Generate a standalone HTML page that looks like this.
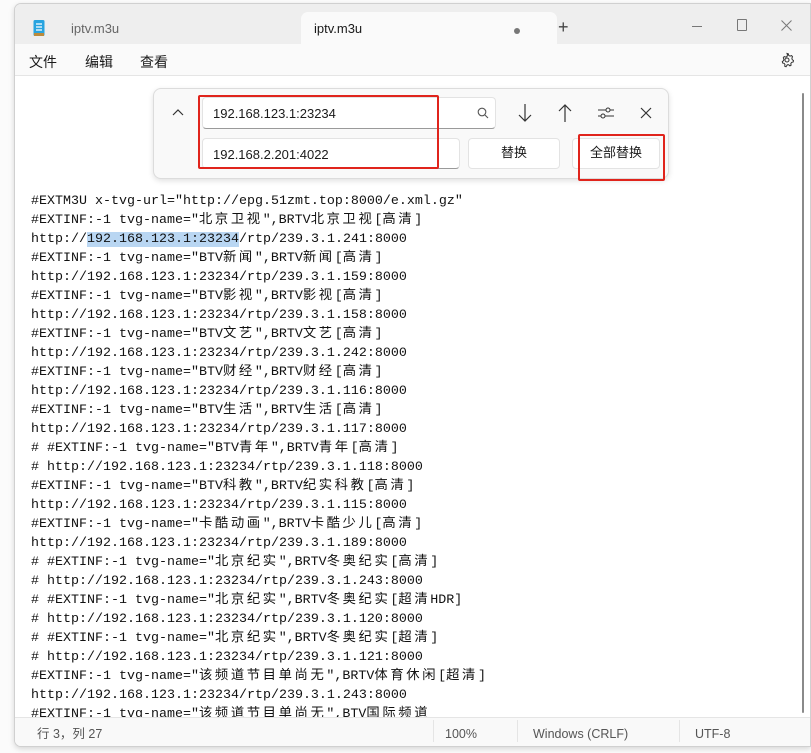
<!DOCTYPE html>
<html><head><meta charset="utf-8"><style>
*{margin:0;padding:0;box-sizing:border-box}
body{width:811px;height:753px;background:#fbfbfb;position:relative;overflow:hidden;font-family:"Liberation Sans","Noto Sans CJK SC",sans-serif;color:#1a1a1a}
.win{position:absolute;left:14px;top:3px;width:797px;height:744px;background:#fff;border:1px solid #d0d0d0;border-radius:7px 0 0 7px;overflow:hidden;box-shadow:0 2px 6px rgba(0,0,0,.15)}
.title{position:absolute;left:0;top:0;width:100%;height:40px;background:#eeeeee}
.tab{position:absolute;left:286px;top:8px;width:256px;height:33px;background:#fafafa;border-radius:7px 7px 0 0}
.menu{position:absolute;left:0;top:40px;width:100%;height:32px;background:#fafafa;border-bottom:1px solid #e5e5e5;font-size:14px}
.menu span{position:absolute;top:8px}
.t{position:absolute;font-size:14px}
.code{position:absolute;left:16px;top:188px;font-family:"Liberation Mono","Noto Sans CJK SC",monospace;font-size:13.33px;color:#111}
.code div{height:19px;line-height:19px;white-space:pre;overflow:visible}
.code i{font-style:normal;letter-spacing:2.6px;font-family:"Noto Sans CJK SC",sans-serif;line-height:0}
.hl{background:#b9d6f2}
.status{position:absolute;left:0;top:713px;width:100%;height:31px;background:#f9f9f9;border-top:1px solid #e5e5e5;font-size:12.5px;color:#555}
.status span{position:absolute;top:8px;line-height:16px;height:16px}
.sep{position:absolute;top:2px;width:1px;height:22px;background:#e5e5e5}
.panel{position:absolute;left:153px;top:88px;width:516px;height:91px;background:#f9f9f9;border:1px solid #dcdcdc;border-radius:8px;box-shadow:0 2px 6px rgba(0,0,0,.12)}
.inp{position:absolute;background:#fff;border:1px solid #e3e3e3;border-bottom:1px solid #9a9a9a;border-radius:4px;font-size:13px;padding:8px 10px}
.btn{position:absolute;background:#fff;border:1px solid #e3e3e3;border-radius:4px;font-size:13px;text-align:center;line-height:28px}
.red{position:absolute;border:2.5px solid #e0241c;border-radius:2px}
</style></head><body>
<div class="win">
 <div class="title"></div>
 <div class="tab"></div>
 <svg style="position:absolute;left:18px;top:15px" width="12" height="18" viewBox="0 0 12 18"><rect x="0.5" y="1" width="11" height="16" rx="1.5" fill="#27a4e0"/><rect x="1" y="14" width="10" height="3" fill="#bb8a3c"/><path d="M3 5h6M3 8h6M3 11h6" stroke="#fff" stroke-width="1.2"/></svg>
 <div class="t" style="left:56px;top:17px;font-size:13px;color:#666">iptv.m3u</div>
 <div class="t" style="left:299px;top:17px;font-size:13px">iptv.m3u</div>
 <div style="position:absolute;left:499px;top:24px;width:6px;height:6px;border-radius:50%;background:#777"></div>
 <div class="t" style="left:543px;top:13px;font-size:18px;color:#444">+</div>
 <div style="position:absolute;left:677px;top:22px;width:10px;height:1px;background:#777"></div>
 <div style="position:absolute;left:722px;top:15px;width:10px;height:12px;border:1px solid #777;border-radius:1px"></div>
 <svg style="position:absolute;left:766px;top:16px" width="11" height="11" viewBox="0 0 11 11"><path d="M.5.5l10 10M10.5.5l-10 10" stroke="#777" stroke-width="1"/></svg>
 <div class="menu"><span style="left:14px">文件</span><span style="left:70px">编辑</span><span style="left:125px">查看</span>
  <svg style="position:absolute;left:764px;top:8px" width="16" height="16" viewBox="0 0 16 16"><path d="M8 1.5l1.3.3.4 1.6 1.3.7 1.6-.5.9 1.1-.6 1.5.3 1.4 1.3 1-.3 1.4-1.6.4-.8 1.2.3 1.6-1.2.7-1.2-1.1h-1.4L7 14.8l-1.3-.6.3-1.6-.8-1.2-1.6-.4-.3-1.4 1.3-1 .3-1.4-.6-1.5.9-1.1 1.6.5 1.3-.7.4-1.6z" fill="none" stroke="#333" stroke-width="1"/><circle cx="8" cy="8" r="2" fill="none" stroke="#333"/></svg>
 </div>
 <div style="position:absolute;left:787px;top:89px;width:2px;height:620px;background:#8a8a8a;border-radius:1px"></div>
<div class="code">
<div>#EXTM3U x-tvg-url="http://epg.51zmt.top:8000/e.xml.gz"</div>
<div>#EXTINF:-1 tvg-name="<i>北京卫视</i>",BRTV<i>北京卫视</i>[<i>高清</i>]</div>
<div>http://<span class="hl">192.168.123.1:23234</span>/rtp/239.3.1.241:8000</div>
<div>#EXTINF:-1 tvg-name="BTV<i>新闻</i>",BRTV<i>新闻</i>[<i>高清</i>]</div>
<div>http://192.168.123.1:23234/rtp/239.3.1.159:8000</div>
<div>#EXTINF:-1 tvg-name="BTV<i>影视</i>",BRTV<i>影视</i>[<i>高清</i>]</div>
<div>http://192.168.123.1:23234/rtp/239.3.1.158:8000</div>
<div>#EXTINF:-1 tvg-name="BTV<i>文艺</i>",BRTV<i>文艺</i>[<i>高清</i>]</div>
<div>http://192.168.123.1:23234/rtp/239.3.1.242:8000</div>
<div>#EXTINF:-1 tvg-name="BTV<i>财经</i>",BRTV<i>财经</i>[<i>高清</i>]</div>
<div>http://192.168.123.1:23234/rtp/239.3.1.116:8000</div>
<div>#EXTINF:-1 tvg-name="BTV<i>生活</i>",BRTV<i>生活</i>[<i>高清</i>]</div>
<div>http://192.168.123.1:23234/rtp/239.3.1.117:8000</div>
<div># #EXTINF:-1 tvg-name="BTV<i>青年</i>",BRTV<i>青年</i>[<i>高清</i>]</div>
<div># http://192.168.123.1:23234/rtp/239.3.1.118:8000</div>
<div>#EXTINF:-1 tvg-name="BTV<i>科教</i>",BRTV<i>纪实科教</i>[<i>高清</i>]</div>
<div>http://192.168.123.1:23234/rtp/239.3.1.115:8000</div>
<div>#EXTINF:-1 tvg-name="<i>卡酷动画</i>",BRTV<i>卡酷少儿</i>[<i>高清</i>]</div>
<div>http://192.168.123.1:23234/rtp/239.3.1.189:8000</div>
<div># #EXTINF:-1 tvg-name="<i>北京纪实</i>",BRTV<i>冬奥纪实</i>[<i>高清</i>]</div>
<div># http://192.168.123.1:23234/rtp/239.3.1.243:8000</div>
<div># #EXTINF:-1 tvg-name="<i>北京纪实</i>",BRTV<i>冬奥纪实</i>[<i>超清</i>HDR]</div>
<div># http://192.168.123.1:23234/rtp/239.3.1.120:8000</div>
<div># #EXTINF:-1 tvg-name="<i>北京纪实</i>",BRTV<i>冬奥纪实</i>[<i>超清</i>]</div>
<div># http://192.168.123.1:23234/rtp/239.3.1.121:8000</div>
<div>#EXTINF:-1 tvg-name="<i>该频道节目单尚无</i>",BRTV<i>体育休闲</i>[<i>超清</i>]</div>
<div>http://192.168.123.1:23234/rtp/239.3.1.243:8000</div>
<div>#EXTINF:-1 tvg-name="<i>该频道节目单尚无</i>",BTV<i>国际频道</i></div>
</div>
 <div class="status"><span style="left:22px">行 3，列 27</span><div class="sep" style="left:418px"></div><span style="left:430px">100%</span><div class="sep" style="left:502px"></div><span style="left:518px">Windows (CRLF)</span><div class="sep" style="left:664px"></div><span style="left:680px">UTF-8</span></div>
</div>
<div class="panel">
 <svg style="position:absolute;left:18px;top:19px" width="12" height="8" viewBox="0 0 12 8"><path d="M1 7l5-5 5 5" fill="none" stroke="#333" stroke-width="1.2"/></svg>
 <div class="inp" style="left:48px;top:8px;width:294px;height:32px">192.168.123.1:23234</div>
 <svg style="position:absolute;left:323px;top:18px" width="12" height="12" viewBox="0 0 12 12"><circle cx="5" cy="5" r="3.8" fill="none" stroke="#555" stroke-width="1.1"/><path d="M8 8l3 3" stroke="#555" stroke-width="1.1"/></svg>
 <div class="inp" style="left:48px;top:49px;width:258px;height:31px">192.168.2.201:4022</div>
 <svg style="position:absolute;left:363px;top:14px" width="16" height="20" viewBox="0 0 16 20"><path d="M8 1v17M2 12l6 6 6-6" fill="none" stroke="#333" stroke-width="1.2"/></svg>
 <svg style="position:absolute;left:403px;top:14px" width="16" height="20" viewBox="0 0 16 20"><path d="M8 19V2M2 8l6-6 6 6" fill="none" stroke="#333" stroke-width="1.2"/></svg>
 <svg style="position:absolute;left:443px;top:16px" width="18" height="16" viewBox="0 0 18 16"><path d="M1 5h16M1 11h16" stroke="#333" stroke-width="1.1"/><circle cx="11" cy="5" r="2" fill="#f9f9f9" stroke="#333"/><circle cx="6" cy="11" r="2" fill="#f9f9f9" stroke="#333"/></svg>
 <svg style="position:absolute;left:486px;top:18px" width="12" height="12" viewBox="0 0 12 12"><path d="M1 1l10 10M11 1L1 11" stroke="#333" stroke-width="1.2"/></svg>
 <div class="btn" style="left:314px;top:49px;width:92px;height:31px">替换</div>
 <div class="btn" style="left:418px;top:49px;width:88px;height:31px">全部替换</div>
</div>
<div class="red" style="left:198px;top:95px;width:241px;height:74px"></div>
<div class="red" style="left:578px;top:134px;width:87px;height:47px"></div>
</body></html>
